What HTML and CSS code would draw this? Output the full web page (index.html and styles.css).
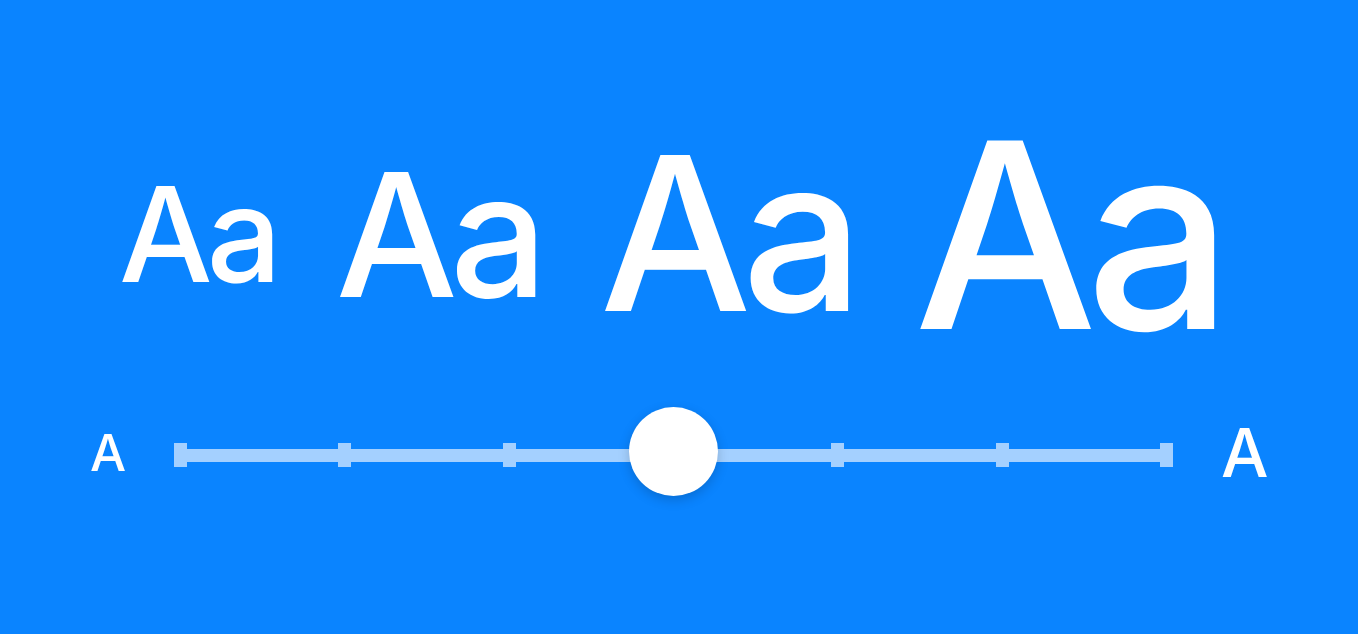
FILE: index.html
```html
<!DOCTYPE html>
<html lang="en">

<head>
    <meta charset="UTF-8">
    <meta name="viewport" content="width=device-width, initial-scale=1.0">
    <title>Text Size</title>
    <link rel="stylesheet" href="styles.css">
</head>

<body>

    <div class="samples">
        <span class="sample size-1">Aa</span>
        <span class="sample size-2">Aa</span>
        <span class="sample size-3">Aa</span>
        <span class="sample size-4">Aa</span>
    </div>

    <div class="slider">
        <span class="slider-label small">A</span>
        <div class="track">
            <span class="tick"></span>
            <span class="tick"></span>
            <span class="tick"></span>
            <span class="tick"></span>
            <span class="tick"></span>
            <span class="tick"></span>
            <span class="tick"></span>
            <div class="knob"></div>
        </div>
        <span class="slider-label large">A</span>
    </div>

</body>

</html>
```

FILE: styles.css
```css
body {
    margin: 0;
    padding: 0;
    background-color: #0a84ff;
    color: #fff;
    font-family: Inter, "Noto Sans", sans-serif;
    height: 634px;
    overflow: hidden;
}

.samples {
    display: flex;
    align-items: center;
    gap: 60px;
    margin-top: 100px;
    height: 268px;
    padding-left: 119px;
}

.sample {
    line-height: 1;
    font-weight: 500;
    letter-spacing: -0.045em;
}

.size-1 { font-size: 132px; }
.size-2 { font-size: 172px; }
.size-3 { font-size: 214px; }
.size-4 { font-size: 259px; }

.slider {
    display: flex;
    align-items: center;
    gap: 48px;
    height: 174px;
    padding: 0 90px;
}

.slider-label {
    line-height: 1;
    font-weight: 500;
    text-align: center;
    margin-bottom: 6px;
}

.slider-label.small {
    width: 36px;
    font-size: 51px;
}

.slider-label.large {
    width: 47px;
    font-size: 67px;
}

.track {
    position: relative;
    flex: 1;
    height: 24px;
    display: flex;
    justify-content: space-between;
    align-items: center;
}

.track::before {
    content: "";
    position: absolute;
    left: 0;
    right: 0;
    top: 6px;
    height: 13px;
    background-color: #a4d0ff;
}

.tick {
    position: relative;
    width: 13px;
    height: 24px;
    background-color: #a4d0ff;
}

.knob {
    position: absolute;
    left: 50%;
    top: 50%;
    width: 89px;
    height: 89px;
    margin-left: -44.5px;
    margin-top: -48.5px;
    border-radius: 50%;
    background-color: #fff;
    box-shadow: 0 4px 12px rgba(0, 0, 0, 0.18);
}
```
